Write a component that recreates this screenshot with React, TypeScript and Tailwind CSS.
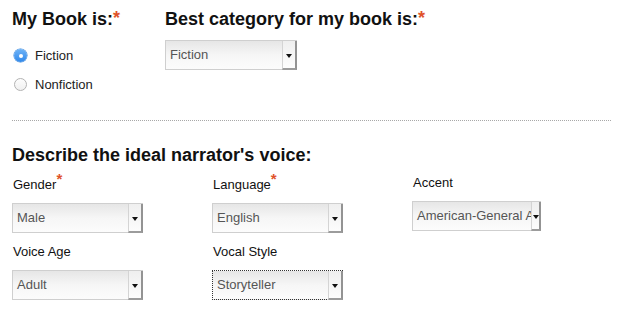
import clsx from 'clsx';

function Req({ small }: { small?: boolean }) {
  return (
    <span
      className={clsx(
        'relative font-bold text-[#e0532b]',
        small ? '-top-[5px] text-[15px] leading-[0]' : '-top-[1px]'
      )}
    >
      *
    </span>
  );
}

interface SelectProps {
  value: string;
  width: 'w-[131px]' | 'w-[132px]' | 'w-[129px]';
  focused?: boolean;
  narrow?: boolean;
}

function Select({ value, width, focused, narrow }: SelectProps) {
  return (
    <div
      className={clsx(
        'flex h-[30px] bg-linear-to-b from-[#e6e6e6] via-[#f6f6f6] to-[#fcfcfc]',
        width,
        focused ? 'border border-dotted border-[#333]' : 'border border-[#cfcfcf]'
      )}
    >
      <span className="flex-1 overflow-hidden whitespace-nowrap pl-[4px] text-[13px] leading-[28px] text-[#555]">
        {value}
      </span>
      <span
        className={clsx(
          '-mr-px -mb-px flex shrink-0 items-center justify-center border-l border-l-[#d4d4d4] border-r-2 border-b-2 border-r-[#939393] border-b-[#9c9c9c] bg-linear-to-b from-[#efefef] to-[#fdfdfd]',
          narrow ? 'w-[10px]' : 'w-[15px]'
        )}
      >
        <span className="mt-[2px] h-0 w-0 border-l-[3px] border-r-[3px] border-t-[4px] border-l-transparent border-r-transparent border-t-[#111]" />
      </span>
    </div>
  );
}

function Radio({ label, checked }: { label: string; checked?: boolean }) {
  return (
    <div className="flex h-[29px] items-center">
      {checked ? (
        <span className="ml-[2px] flex h-[13px] w-[13px] items-center justify-center rounded-full bg-linear-to-b from-[#6db3f7] to-[#2f88ea] shadow-[0_0_0_0.5px_#3a86d8]">
          <span className="h-[4px] w-[4px] rounded-full bg-white" />
        </span>
      ) : (
        <span className="ml-[2px] h-[13px] w-[13px] rounded-full border border-[#b3b3b3] bg-linear-to-b from-[#fdfdfd] to-[#f0f0f0]" />
      )}
      <span className="ml-[8px] text-[13px] leading-[16px] text-[#222]">{label}</span>
    </div>
  );
}

function Field({
  label,
  required,
  value,
  focused,
  narrow,
  width = 'w-[131px]',
  className,
}: {
  label: string;
  required?: boolean;
  value: string;
  focused?: boolean;
  narrow?: boolean;
  width?: SelectProps['width'];
  className?: string;
}) {
  return (
    <div className={className}>
      <div className="pl-[1px] text-[13px] leading-[16px] text-[#111]">
        {label}
        {required && <Req small />}
      </div>
      <div className="mt-[10px]">
        <Select value={value} width={width} focused={focused} narrow={narrow} />
      </div>
    </div>
  );
}

export default function App() {
  return (
    <div className="h-[328px] w-[622px] overflow-hidden bg-white px-[12px] font-['Liberation_Sans',Arial,sans-serif]">
      {/* Book type + category */}
      <div className="flex pt-[8px]">
        <div className="w-[153px]">
          <h2 className="text-[18px] font-bold leading-[22px] text-[#111]">
            My Book is:<Req />
          </h2>
          <div className="mt-[11px]">
            <Radio label="Fiction" checked />
            <Radio label="Nonfiction" />
          </div>
        </div>
        <div>
          <h2 className="text-[18px] font-bold leading-[22px] text-[#111]">
            Best category for my book is:<Req />
          </h2>
          <div className="mt-[10px]">
            <Select value="Fiction" width="w-[132px]" />
          </div>
        </div>
      </div>

      <div className="mt-[21px] w-[599px] border-t border-dotted border-[#a8a8a8]" />

      {/* Narrator voice */}
      <h2 className="mt-[23px] text-[18px] font-bold leading-[22px] text-[#111]">
        Describe the ideal narrator's voice:
      </h2>
      <div className="mt-[11px] grid grid-cols-[200px_200px_200px] gap-y-[11px]">
        <Field label="Gender" required value="Male" />
        <Field label="Language" required value="English" />
        <Field
          label="Accent"
          value="American-General Accent"
          width="w-[129px]"
          narrow
          className="-mt-[2px]"
        />
        <Field label="Voice Age" value="Adult" />
        <Field label="Vocal Style" value="Storyteller" focused />
      </div>
    </div>
  );
}
